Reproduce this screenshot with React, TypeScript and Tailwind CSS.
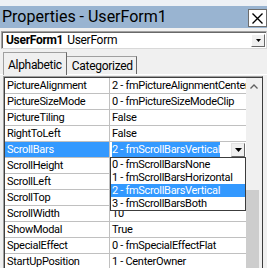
import React from "react";

const rows: [string, string][] = [
  ["PictureAlignment", "2 - fmPictureAlignmentCenter"],
  ["PictureSizeMode", "0 - fmPictureSizeModeClip"],
  ["PictureTiling", "False"],
  ["RightToLeft", "False"],
  ["ScrollBars", "2 - fmScrollBarsVertical"],
  ["ScrollHeight", "0"],
  ["ScrollLeft", "0"],
  ["ScrollTop", "0"],
  ["ScrollWidth", "10"],
  ["ShowModal", "True"],
  ["SpecialEffect", "0 - fmSpecialEffectFlat"],
  ["StartUpPosition", "1 - CenterOwner"],
];

const listItems = [
  "0 - fmScrollBarsNone",
  "1 - fmScrollBarsHorizontal",
  "2 - fmScrollBarsVertical",
  "3 - fmScrollBarsBoth",
];

export default function App() {
  return (
    <div className="w-[267px] h-[268px] overflow-hidden bg-[#f0f0f0] flex flex-col font-['Roboto',sans-serif] text-[11px] tracking-[-0.3px] text-black">
      <div className="h-[6px] shrink-0 bg-[#eef1f5]" />
      <div className="h-[22px] shrink-0 bg-[#99b4d1] flex items-center justify-between">
        <span className="pl-[2px] text-[16px] tracking-normal leading-none">Properties - UserForm1</span>
        <div className="w-[19px] h-[18px] mt-[2px] bg-white border border-[#6d6d6d] flex items-center justify-center">
          <svg width="11" height="11" viewBox="0 0 11 11">
            <path d="M0.5 0.5 L10.5 10.5 M10.5 0.5 L0.5 10.5" stroke="#000" strokeWidth="1.4" />
          </svg>
        </div>
      </div>
      <div className="h-[3px] shrink-0" />
      <div className="h-[18px] shrink-0 ml-[1px] border border-[#a0a0a0] border-b-[#d8d8d8] border-r-[#d8d8d8] bg-white flex items-center shadow-[inset_1px_1px_0_#696969] text-[12px]">
        <span className="pl-[4px] font-bold">UserForm1</span>
        <span className="pl-[4px]">UserForm</span>
        <div className="ml-auto mr-[1px] w-[14px] h-[13px] bg-[#f0f0f0] border border-white border-r-[#696969] border-b-[#696969] flex items-center justify-center">
          <svg width="5" height="3" viewBox="0 0 5 3">
            <path d="M0 0 L5 0 L2.5 3 Z" fill="#000" />
          </svg>
        </div>
      </div>
      <div className="h-[25px] shrink-0 flex items-end pl-[3px] text-[12px]">
        <div className="relative z-10 h-[23px] mb-[-1px] px-[4px] bg-[#f0f0f0] border-l border-t border-[#a0a0a0] border-r border-r-[#696969] flex items-center pt-[1px]">
          Alphabetic
        </div>
        <div className="h-[18px] pl-[5px] pr-[3px] border-t border-[#a0a0a0] border-r border-r-[#696969] flex items-center">
          Categorized
        </div>
      </div>
      <div className="flex-1 border-t border-white pt-[1px] flex flex-col">
        <div className="ml-[3px] w-[260px] flex-1 flex border-l border-t border-[#a0a0a0] border-r border-r-[#3c3c3c]">
          <div className="flex-1 flex border-l border-t border-[#404040] bg-white">
            <div className="relative w-[241px] flex flex-col">
              {rows.map(([k, v]) => {
                const sel = k === "ScrollBars";
                return (
                  <div key={k} className="h-[16px] shrink-0 flex border-b border-[#c0c0c0]">
                    <div
                      className={
                        "w-[105px] shrink-0 border-r border-[#c0c0c0] pl-[2px] leading-[15px] whitespace-nowrap overflow-hidden " +
                        (sel ? "bg-[#3399ff] text-white" : "")
                      }
                    >
                      {k}
                    </div>
                    <div className="flex-1 flex items-center pl-[2px] whitespace-nowrap overflow-hidden leading-[15px]">
                      {sel ? (
                        <>
                          <span className="bg-[#3399ff] text-white">{v}</span>
                          <div className="ml-auto mr-[1px] w-[14px] h-[14px] bg-[#f0f0f0] border border-[#e3e3e3] border-r-[#696969] border-b-[#696969] flex items-center justify-center">
                            <svg width="7" height="4" viewBox="0 0 7 4">
                              <path d="M0 0 L7 0 L3.5 4 Z" fill="#000" />
                            </svg>
                          </div>
                        </>
                      ) : (
                        <span>{v}</span>
                      )}
                    </div>
                  </div>
                );
              })}
              <div className="absolute left-[105px] top-[79px] w-[136px] border border-[#3c3c3c] bg-white flex flex-col">
                {listItems.map((t, i) => (
                  <div
                    key={t}
                    className={
                      "h-[13px] leading-[13px] pl-[1px] whitespace-nowrap overflow-hidden " +
                      (i === 2 ? "bg-[#3399ff] text-white" : "")
                    }
                  >
                    {t}
                  </div>
                ))}
              </div>
            </div>
            <div className="w-[16px] flex flex-col bg-[#f0f0f0]">
              <div className="h-[17px] shrink-0 flex items-center justify-center">
                <svg width="8" height="5" viewBox="0 0 8 5">
                  <path d="M0.5 4.5 L4 1 L7.5 4.5" stroke="#606060" strokeWidth="1.3" fill="none" />
                </svg>
              </div>
              <div className="h-[95px] shrink-0" />
              <div className="flex-1 mr-[3px] bg-[#cdcdcd]" />
            </div>
          </div>
        </div>
      </div>
    </div>
  );
}
